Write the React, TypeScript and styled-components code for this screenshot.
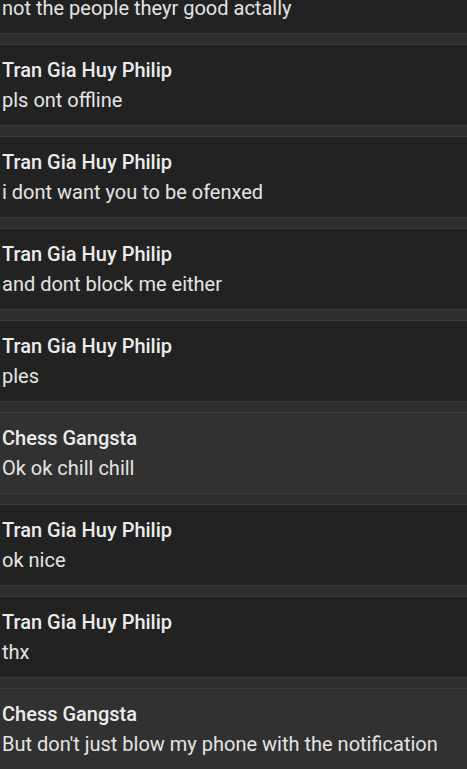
import React from "react";
import styled, { createGlobalStyle } from "styled-components";

const Global = createGlobalStyle`
  html, body { margin: 0; padding: 0; background: #2e2e2e; overflow: hidden; }
  body { font-family: Roboto, "Noto Sans", "Liberation Sans", sans-serif; }
`;

const List = styled.div`
  display: flex;
  flex-direction: column;
  gap: 10px;
  margin-top: -48px;
`;

const Card = styled.div<{ $self?: boolean }>`
  background: ${(p) => (p.$self ? "#313131" : "#222222")};
  border-top: 1px solid #3b3b3b;
  border-bottom: 1px solid #3b3b3b;
  padding: 10px 2px;
  display: flex;
  flex-direction: column;
`;

const Name = styled.div`
  font-size: 20px;
  font-weight: 500;
  line-height: 30px;
  color: #ececec;
`;

const Text = styled.div`
  font-size: 20px;
  font-weight: 400;
  line-height: 30px;
  color: #e4e4e4;
  white-space: nowrap;
`;

const messages = [
  { name: "Tran Gia Huy Philip", text: "not the people theyr good actally", self: false },
  { name: "Tran Gia Huy Philip", text: "pls ont offline", self: false },
  { name: "Tran Gia Huy Philip", text: "i dont want you to be ofenxed", self: false },
  { name: "Tran Gia Huy Philip", text: "and dont block me either", self: false },
  { name: "Tran Gia Huy Philip", text: "ples", self: false },
  { name: "Chess Gangsta", text: "Ok ok chill chill", self: true },
  { name: "Tran Gia Huy Philip", text: "ok nice", self: false },
  { name: "Tran Gia Huy Philip", text: "thx", self: false },
  { name: "Chess Gangsta", text: "But don't just blow my phone with the notification", self: true },
];

export default function App() {
  return (
    <>
      <Global />
      <List>
        {messages.map((m, i) => (
          <Card key={i} $self={m.self}>
            <Name>{m.name}</Name>
            <Text>{m.text}</Text>
          </Card>
        ))}
      </List>
    </>
  );
}
